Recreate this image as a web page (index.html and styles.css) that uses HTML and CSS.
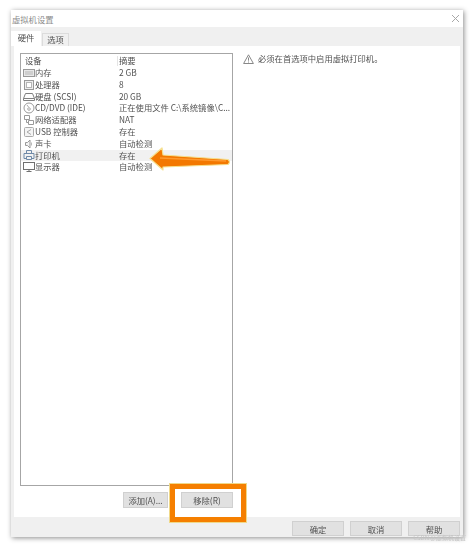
FILE: index.html
```html
<!DOCTYPE html>
<html lang="zh-CN">
<head>
    <meta charset="UTF-8">
    <meta name="viewport" content="width=device-width, initial-scale=1.0">
    <title>虚拟机设置</title>
    <link rel="stylesheet" href="styles.css">
</head>
<body>
    <div class="window">
        <div class="titlebar">
            <span class="title">虚拟机设置</span>
            <svg class="close" width="9" height="9" viewBox="0 0 9 9"><path d="M1 1l7 7M8 1L1 8" stroke="#a8a8a8" fill="none"/></svg>
        </div>
        <div class="tabs">
            <div class="tab active">硬件</div>
            <div class="tab">选项</div>
        </div>
        <div class="pane">
            <div class="left">
                <div class="list">
                    <div class="row head"><span class="name">设备</span><span class="sep"></span><span>摘要</span></div>
                    <div class="row"><span class="name">
                        <svg class="icon" viewBox="0 0 12 12"><rect x="0.5" y="2.5" width="11" height="7" fill="#e8e8e8" stroke="#999"/><path d="M2 5h8M2 7h8" stroke="#b5b5b5"/></svg>内存</span><span>2 GB</span></div>
                    <div class="row"><span class="name">
                        <svg class="icon" viewBox="0 0 12 12"><rect x="1.5" y="1.5" width="9" height="9" fill="#eee" stroke="#999"/><rect x="3.5" y="3.5" width="5" height="5" fill="#fff" stroke="#b5b5b5"/></svg>处理器</span><span>8</span></div>
                    <div class="row"><span class="name">
                        <svg class="icon" viewBox="0 0 12 12"><path d="M2.5 2.5h7l2 5v2h-11v-2zM.5 7.5h11" fill="none" stroke="#808080"/></svg>硬盘 (SCSI)</span><span>20 GB</span></div>
                    <div class="row"><span class="name">
                        <svg class="icon" viewBox="0 0 12 12"><circle cx="6" cy="6" r="5" fill="none" stroke="#999"/><circle cx="6" cy="7" r="1.3" fill="none" stroke="#aaa"/><path d="M4 3l1.5 2" stroke="#aaa"/></svg>CD/DVD (IDE)</span><span>正在使用文件 C:\系统镜像\C...</span></div>
                    <div class="row"><span class="name">
                        <svg class="icon" viewBox="0 0 12 12"><path d="M1.5 1.5h5v4h-5zM5.5 6.5h5v4h-5zM3.5 5.5v3h2" fill="none" stroke="#999"/></svg>网络适配器</span><span>NAT</span></div>
                    <div class="row"><span class="name">
                        <svg class="icon" viewBox="0 0 12 12"><rect x="1.5" y="1.5" width="9" height="9" rx="1" fill="#f4f4f4" stroke="#aaa"/><path d="M8 3.5L4 6l4 2.5" fill="none" stroke="#aaa"/></svg>USB 控制器</span><span>存在</span></div>
                    <div class="row"><span class="name">
                        <svg class="icon" viewBox="0 0 12 12"><path d="M2.5 4.5h2l2.5-2.5v8L4.5 7.5h-2z" fill="#f4f4f4" stroke="#999"/><path d="M8.5 4.5v3" stroke="#bbb"/></svg>声卡</span><span>自动检测</span></div>
                    <div class="row selected"><span class="name">
                        <svg class="icon" viewBox="0 0 12 12"><path d="M3.500 4.500v-3h5v3M3.500 9.500h-2.500v-5h10v5h-2.500M3.500 7.500h5v3h-5z" fill="none" stroke="#6f8aa8"/></svg>打印机</span><span>存在</span></div>
                    <div class="row"><span class="name">
                        <svg class="icon" viewBox="0 0 12 12"><rect x="0.500" y="1.500" width="11" height="7" fill="#fff" stroke="#707070"/><path d="M3.500 10.500h5M6 8.500v2" stroke="#707070"/></svg>显示器</span><span>自动检测</span></div>
                </div>
                <div class="list-actions">
                    <button class="btn add">添加(A)...</button>
                    <button class="btn remove">移除(R)</button>
                </div>
            </div>
            <div class="right">
                <svg class="warn" width="11" height="10" viewBox="0 0 11 10"><path d="M5.500 .8L10.400 9.500H.6z" fill="none" stroke="#888"/><path d="M5.500 3.500v3.200M5.500 7.500v1" stroke="#888"/></svg>
                <span>必须在首选项中启用虚拟打印机。</span>
            </div>
        </div>
        <div class="footer">
            <button class="btn">确定</button>
            <button class="btn">取消</button>
            <button class="btn">帮助</button>
        </div>

        <!-- annotations drawn over the dialog -->
        <svg class="arrow" width="90" height="30" viewBox="0 0 90 30">
            <path d="M2 13.500L14 3L15 10L80 14.500Q83 17 80 19.500L15 22L15 25z" fill="#f37800" stroke="#f6e08e" stroke-width="1.200" stroke-linejoin="round"/>
            <path d="M12 13L78 16" stroke="#ff9a2e" stroke-width="1.500"/>
        </svg>
        <div class="highlight"></div>
    </div>
    <span class="mark">CSDN @虚拟机设置</span>
</body>
</html>
```

FILE: styles.css
```css
* {
    margin: 0;
    padding: 0;
    box-sizing: border-box;
}

body {
    font-family: "Noto Sans CJK SC", "Liberation Sans", sans-serif;
    font-size: 8.3px;
    color: #505050;
    background: #fff;
    padding: 10px 11px 11px;
    height: 548px;
    overflow: hidden;
    position: relative;
}

.window {
    position: relative;
    height: 527px;
    background: #f0f0f0;
    box-shadow: 1px 1px 5px rgba(0, 0, 0, 0.45);
    display: flex;
    flex-direction: column;
    filter: blur(0.3px);
}

.titlebar {
    height: 17px;
    background: #fff;
    display: flex;
    align-items: center;
    justify-content: space-between;
    padding: 0 3px 0 1px;
}

.title {
    color: #8c8c8c;
}

.tabs {
    height: 19px;
    display: flex;
    align-items: flex-end;
}

.tab {
    height: 13px;
    width: 27px;
    margin-left: 1px;
    text-align: center;
    line-height: 10px;
    background: #f0f0f0;
    border: 1px solid #dcdcdc;
    border-bottom: 0;
}

.tab.active {
    height: 15px;
    width: 30px;
    margin-left: 0;
    line-height: 11px;
    background: #fff;
    border-color: #fff;
}

.pane {
    flex: 1;
    margin: 0 3px;
    background: #fff;
    display: flex;
    padding: 7px 0 9px 6px;
}

.left {
    width: 213px;
    display: flex;
    flex-direction: column;
}

.list {
    flex: 1;
    border: 1px solid #a6a6a6;
}

.row {
    height: 11.8px;
    line-height: 11.8px;
    display: flex;
    align-items: center;
    padding-left: 2px;
    white-space: nowrap;
}

.row.head {
    padding-left: 4px;
    height: 13px;
}

.row.selected {
    background: #f1f1f1;
}

.name {
    width: 96px;
    display: flex;
    align-items: center;
}

.head .name {
    width: 92px;
}

.sep {
    width: 1px;
    height: 10px;
    background: #e4e4e4;
    margin-right: 1px;
}

.icon {
    width: 12px;
    height: 12px;
    flex: none;
}

.list-actions {
    height: 22px;
    display: flex;
    justify-content: flex-end;
    align-items: flex-end;
    gap: 13px;
}

.btn {
    font: inherit;
    color: #505050;
    width: 52px;
    height: 16px;
    background: #e1e1e1;
    border: 1px solid #d0d0d0;
}

.footer .btn {
    height: 15px;
}

.btn.add {
    width: 45px;
}

.right {
    flex: 1;
    display: flex;
    align-items: flex-start;
    gap: 4px;
    padding: 0 0 0 10px;
    line-height: 11px;
}

.warn {
    flex: none;
    margin-top: 1px;
}

.footer {
    height: 20px;
    display: flex;
    justify-content: flex-end;
    align-items: flex-end;
    gap: 6px;
    padding: 0 3px 1px 0;
}

.arrow {
    position: absolute;
    left: 137px;
    top: 135px;
}

.highlight {
    position: absolute;
    left: 159px;
    top: 474px;
    width: 76px;
    height: 38px;
    border: 5px solid #f57f00;
    outline: 1px solid #f0d98a;
}

.mark {
    position: absolute;
    right: 8px;
    bottom: 6px;
    font-size: 6px;
    color: #c4c4c4;
}
```
